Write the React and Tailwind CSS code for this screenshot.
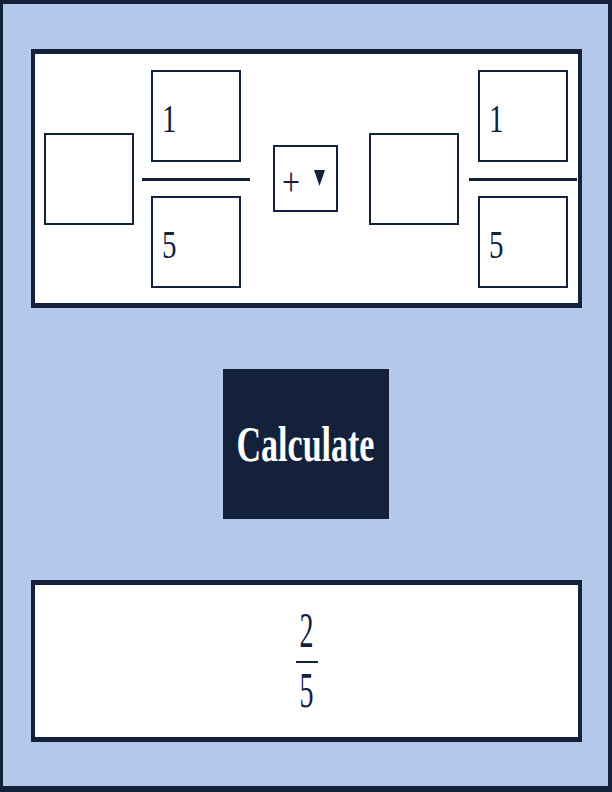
import React from 'react';

const serif = { fontFamily: '"Liberation Serif", "Times New Roman", serif' };

const NumBox = ({ value }) => (
  <div className="w-[90px] h-[92px] border-2 border-[#13223a] bg-white flex items-center pl-[9px] text-[#13223a]">
    <span className="inline-block text-[29px] leading-none scale-y-[1.4] translate-y-[3px]" style={serif}>
      {value}
    </span>
  </div>
);

const Fraction = ({ num, den }) => (
  <div className="w-[108px] flex flex-col items-center">
    <NumBox value={num} />
    <div className="w-full h-[3px] bg-[#13223a] mt-[16px] mb-[15px]" />
    <NumBox value={den} />
  </div>
);

const OperatorSelect = () => (
  <div className="w-[65px] h-[67px] border-2 border-[#13223a] bg-white flex items-center pl-[7px] gap-[14px] text-[#13223a]">
    <span className="inline-block text-[32px] leading-none scale-y-[1.25] translate-y-[2px]" style={serif}>+</span>
    <svg width="11" height="18" viewBox="0 0 11 18" className="mb-[4px]">
      <polygon points="0,2 11,2 5.5,18" fill="#13223a" />
    </svg>
  </div>
);

export default function App() {
  return (
    <div className="w-[612px] h-[792px] bg-[#b4c9e9] border-[#13223a] border-l-[3px] border-t-[4px] border-r-[4px] border-b-[6px] flex flex-col">
      <div className="ml-[28px] mt-[45px] w-[551px] h-[259px] bg-white border-[#13223a] border-x-4 border-y-[5px] flex items-center pl-[9px]">
        <NumBox value="" />
        <div className="ml-[8px]">
          <Fraction num="1" den="5" />
        </div>
        <div className="ml-[23px]">
          <OperatorSelect />
        </div>
        <div className="ml-[31px]">
          <NumBox value="" />
        </div>
        <div className="ml-[10px]">
          <Fraction num="1" den="5" />
        </div>
      </div>

      <button className="self-center mt-[61px] w-[166px] h-[150px] bg-[#13223a] text-white flex items-center justify-center">
        <span className="inline-block text-[34px] font-bold leading-none scale-y-[1.5]" style={serif}>
          Calculate
        </span>
      </button>

      <div className="ml-[28px] mt-[61px] w-[551px] h-[162px] bg-white border-[#13223a] border-x-4 border-y-[5px] flex items-center justify-center">
        <div className="flex flex-col items-center text-[#13223a]">
          <span className="inline-block text-[28px] leading-none scale-y-[1.8]" style={serif}>2</span>
          <div className="w-[22px] h-[2px] bg-[#13223a] mt-[16px] mb-[14px]" />
          <span className="inline-block text-[28px] leading-none scale-y-[1.8]" style={serif}>5</span>
        </div>
      </div>
    </div>
  );
}
